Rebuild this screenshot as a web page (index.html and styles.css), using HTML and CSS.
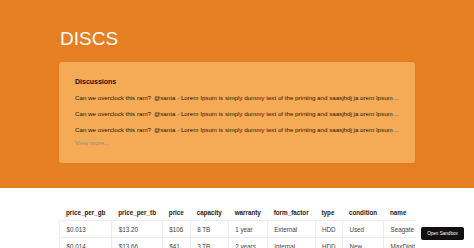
FILE: index.html
```html
<!DOCTYPE html>
<html>
<head>
<meta charset="utf-8">
<link rel="stylesheet" href="styles.css">
</head>
<body>
<header class="hero">
  <div class="wrap">
    <h1 class="title">DISCS</h1>
    <section class="card">
      <h2 class="card-title">Discussions</h2>
      <p class="line"><span class="q">Can we overclock this ram?</span>@santa - Lorem Ipsum is simply dummy text of the printing and saasjhdj ja orem Ipsum is simply dummy text</p>
      <p class="line"><span class="q">Can we overclock this ram?</span>@santa - Lorem Ipsum is simply dummy text of the printing and saasjhdj ja orem Ipsum is simply dummy text</p>
      <p class="line"><span class="q">Can we overclock this ram?</span>@santa - Lorem Ipsum is simply dummy text of the printing and saasjhdj ja orem Ipsum is simply dummy text</p>
      <a class="more" href="#">View more...</a>
    </section>
  </div>
</header>
<main class="wrap table-wrap">
  <table class="grid">
    <thead>
      <tr><th>price_per_gb</th><th>price_per_tb</th><th>price</th><th>capacity</th><th>warranty</th><th>form_factor</th><th>type</th><th>condition</th><th>name</th></tr>
    </thead>
    <tbody>
      <tr><td>$0.013</td><td>$13.20</td><td>$106</td><td>8 TB</td><td>1 year</td><td>External</td><td>HDD</td><td>Used</td><td>Seagate</td></tr>
      <tr><td>$0.014</td><td>$13.66</td><td>$41</td><td>3 TB</td><td>2 years</td><td>Internal</td><td>HDD</td><td>New</td><td>MaxDigital</td></tr>
    </tbody>
  </table>
</main>
<a class="sandbox" href="#">Open Sandbox</a>
</body>
</html>
```
FILE: styles.css
```css
html, body {
  margin: 0;
  padding: 0;
  background: #ffffff;
  font-family: "Liberation Sans", Arial, sans-serif;
}
.wrap {
  width: 356px;
  margin: 0 auto;
}
.hero {
  background: #e67e22;
  padding: 28px 0 25px;
}
.title {
  margin: 0 0 0 1px;
  font-size: 19px;
  line-height: 22px;
  font-weight: normal;
  color: #ffffff;
}
.card {
  margin-top: 12px;
  background: #f5aa55;
  border-radius: 3px;
  padding: 16px 16px 16px;
  box-shadow: 0 0 1px rgba(180, 90, 10, 0.35);
}
.card-title {
  margin: 0 0 4px;
  font-size: 7px;
  line-height: 8px;
  font-weight: bold;
  color: #1a1208;
}
.line {
  margin: 0;
  font-size: 6.2px;
  line-height: 16px;
  color: #1e160c;
  white-space: nowrap;
  overflow: hidden;
  text-overflow: ellipsis;
}
.q {
  margin-right: 3px;
}
.more {
  display: block;
  margin-top: 1px;
  font-size: 6.2px;
  line-height: 8px;
  color: #8c8f98;
  text-decoration: none;
}
.table-wrap {
  margin-top: 16px;
  overflow: hidden;
}
.grid {
  border-collapse: collapse;
  font-size: 6.3px;
  white-space: nowrap;
}
.grid th {
  text-align: left;
  font-weight: bold;
  color: #222222;
  padding: 4.5px 6.4px;
  line-height: 7px;
}
.grid td {
  color: #444444;
  padding: 4.5px 6.4px;
  line-height: 7.2px;
  border: 1px solid #ececec;
}
.sandbox {
  position: fixed;
  right: 10px;
  bottom: 8px;
  width: 43px;
  height: 13px;
  line-height: 13px;
  text-align: center;
  background: #111111;
  color: #ffffff;
  font-size: 4.6px;
  border-radius: 2px;
  text-decoration: none;
}
```
